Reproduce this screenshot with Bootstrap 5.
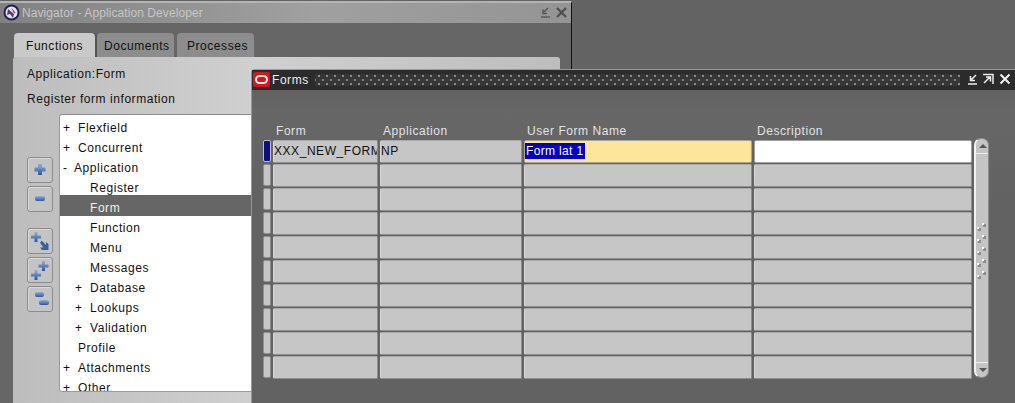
<!DOCTYPE html>
<html lang="en"><head><meta charset="utf-8"><title>Forms</title>
<link href="https://cdn.jsdelivr.net/npm/bootstrap@5.3.0/dist/css/bootstrap.min.css" rel="stylesheet">
<style>
html,body{height:100%}
body{background:#636363;font-family:"Liberation Sans",Arial,sans-serif;font-size:12px;letter-spacing:.55px;color:#111;overflow:hidden;margin:0}
.desk{position:relative;width:1015px;height:403px;overflow:hidden;background:#636363}
.navwin{position:absolute;left:0;top:1px;width:572px;height:420px;background:#666;border-right:1px solid #111;border-top:2px solid #b4b4b4}
.navtitle{height:20px;background:linear-gradient(90deg,#818181,#a0a0a0 55%,#949494);color:#c6c6c6;padding-left:22px;font-size:12px;line-height:21px;position:relative;letter-spacing:.08px}
.logo{position:absolute;left:3px;top:1px}
.wbtns{position:absolute;right:3px;top:3px;gap:3px}
.tabrow{padding-left:14px;gap:3px;height:34px;align-items:flex-end}
.tabx{height:24px;background:#8c8c8c;border-radius:4px 4px 0 0;padding:6px 0 0 10px;color:#111;width:77px;line-height:14px}
.tabx.on{background:#c9c9c9;width:81px;height:26px;padding-left:12px;box-shadow:2px 0 0 #555;margin-right:-1px;margin-bottom:-2px;position:relative}
.tabx.w2{padding-left:7px}
.tabpane{position:relative;margin-left:13px;width:547px;height:370px;background:linear-gradient(90deg,#bdbdbd,#d0d0d0 45%,#bdbdbd);border-radius:3px}
.lab1{padding:10px 0 0 14px;line-height:15px}
.lab2{padding:10px 0 0 14px;line-height:15px}
.sidebtns{position:absolute;left:14px;top:100px;width:26px}
.sbtn{width:26px;height:26px;border:1px solid #8c8c8c;border-radius:3px;background:#c4c4c4;margin-bottom:3px;box-shadow:inset 1px 1px 0 #d8d8d8}
.sbtn svg{display:block}
.gap13{margin-top:16px}
.treebox{position:absolute;left:46px;top:57px;width:200px;height:278px;background:#fff;border:1px solid #9a9a9a;border-top-color:#8a8a8a;border-radius:3px;overflow:hidden;padding-top:3px}
.trow{height:20px;line-height:20px;color:#111;white-space:nowrap;position:relative}
.trow.sel{background:#666;color:#eee;height:21px;margin-top:-3px;margin-bottom:2px;padding-top:3px;line-height:20px}
.tsign{position:absolute;top:0}
.ind0{padding-left:18px}.ind0b{padding-left:14px}.ind1{padding-left:30px}
.formswin{position:absolute;left:251px;top:69px;width:770px;height:340px;background:linear-gradient(180deg,#5a5a5a,#676767 40px,#626262 130px);border:1px solid #999;border-radius:4px 4px 0 0;border-right:0}
.ftitle{height:20px;background:#2b2b2b;color:#eee;position:relative;padding-left:20px;line-height:20px}
.oralogo{position:absolute;left:1px;top:2px;width:17px;height:15px;background:#d3171a;border-radius:2px}
.oralogo::after{content:"";position:absolute;left:2px;top:3px;width:13px;height:9px;border:2px solid #f6e8e8;border-radius:5px}
.dots{position:absolute;left:63px;top:4px;width:645px;height:12px;background-color:#363636;background-image:radial-gradient(circle,#8c8c8c .8px,transparent 1.1px),radial-gradient(circle,#808080 .8px,transparent 1.1px);background-size:8px 8px;background-position:0 -2px,4px 2px}
.fbtns{position:absolute;right:10px;top:3px;gap:3px}
.fbtns svg:last-child{margin-left:2px}
.gridwrap{position:absolute;left:11px;top:54px}
.heads{display:grid;grid-template-columns:105px 142px 228px 218px;column-gap:2px;padding-left:10px;color:#e2e2e2;height:16px;line-height:14px}
.heads span{padding-left:3px}
.gridrows{display:grid;grid-template-columns:8px 105px 142px 228px 218px;grid-auto-rows:24px;column-gap:2px}
.ind{height:22px;background:#c6c6c6;border:1px solid #8f8f8f;border-radius:2px}
.ind.cur{background:#0b127e;border-color:#bcbcd0}
.cellx{height:23px;background:#c6c6c6;border:1px solid #8e8e8e;border-top-color:#aaa;border-left-color:#d9d9d9;border-radius:2px;line-height:20px;color:#111;white-space:nowrap;overflow:hidden}
.cellx.cy{background:#fde69b;border-color:#a9a58a}
.cellx.cw{background:#fff;border-color:#a0a0a0}
.hili{background:#0000c8;color:#fff;padding:1px;letter-spacing:.35px}
.sbar{position:absolute;left:722px;top:68px;width:15px;height:240px;background:#c4c4c4;border:1px solid #8c8c8c;border-left:2px solid #f2f2f2;border-radius:7px}
.sbar::before{content:"";position:absolute;left:0;right:0;top:14px;height:1px;background:#eee}
.sbar::after{content:"";position:absolute;left:0;right:0;bottom:14px;height:1px;background:#eee}
.arrup,.arrdn{position:absolute;left:3px;width:0;height:0;border-left:4px solid transparent;border-right:4px solid transparent}
.arrup{top:5px;border-bottom:4px solid #555}
.arrdn{bottom:5px;border-top:4px solid #555}
.ridge{position:absolute;left:0;top:83px;display:block}
</style></head><body>
<main class="desk">
 <svg width="0" height="0" class="position-absolute"><defs><linearGradient id="gb" x1="0" y1="0" x2="0" y2="1"><stop offset="0" stop-color="#8fb0de"/><stop offset="1" stop-color="#2f5596"/></linearGradient>
 <pattern id="rd" width="12" height="12" patternUnits="userSpaceOnUse"><rect x="2" y="6" width="3" height="3" fill="#8e8e8e"/><rect x="1" y="5" width="2" height="2" fill="#f8f8f8"/><rect x="7" y="2" width="3" height="3" fill="#8e8e8e"/><rect x="6" y="1" width="2" height="2" fill="#f8f8f8"/></pattern></defs></svg>
 <section class="navwin">
  <div class="navtitle">
   <svg class="logo" width="17" height="17" viewBox="0 0 17 17"><circle cx="8.500" cy="8.500" r="7" fill="#e4e4ee" stroke="#22225a" stroke-width="2"/><path d="M5 5l6 5-1 4-3-4-3 1z" fill="#50406e"/><path d="M8 3.500l3 6 1.500-1z" fill="#c0206a"/></svg>
   <span>Navigator - Application Developer</span>
   <div class="wbtns d-flex">
    <svg width="13" height="13" viewBox="0 0 13 13"><path d="M2 11h9M9 2L4 7M4 3.500V7.500H8" stroke="#5c5c5c" stroke-width="1.600" fill="none"/></svg>
    <svg width="13" height="13" viewBox="0 0 13 13"><path d="M2 2l9 9M11 2l-9 9" stroke="#4e4e4e" stroke-width="2.200"/></svg>
   </div>
  </div>
  <div class="tabrow d-flex">
   <div class="tabx on">Functions</div><div class="tabx w2">Documents</div><div class="tabx">Processes</div>
  </div>
  <div class="tabpane">
   <div class="lab1">Application:Form</div>
   <div class="lab2">Register form information</div>
   <div class="sidebtns">
    <div class="sbtn"><svg width="24" height="24" viewBox="0 0 24 24"><path d="M10 6h4v3.500h3.500v4H14V17h-4v-3.500H6.500v-4H10z" fill="url(#gb)"/></svg></div>
    <div class="sbtn"><svg width="24" height="24" viewBox="0 0 24 24"><rect x="7" y="9" width="10" height="5" rx="2" fill="url(#gb)"/></svg></div>
    <div class="sbtn gap13"><svg width="24" height="24" viewBox="0 0 24 24"><path d="M6.500 3h3v3.500H13v3H9.500V13h-3V9.500H3v-3h3.500z" fill="url(#gb)"/><path d="M12 13.500l1.800-1.800 4.200 4.200V13l2.500 2v6H14l-2-2.400h3.200z" fill="#36609f"/></svg></div>
    <div class="sbtn"><svg width="24" height="24" viewBox="0 0 24 24"><path d="M14 3h3v3.500h3.500v3H17V13h-3V9.500h-3.500v-3H14z" fill="url(#gb)"/><path d="M6.500 12h3v3.500H13v3H9.500V22h-3v-3.500H3v-3h3.500z" fill="url(#gb)"/></svg></div>
    <div class="sbtn"><svg width="24" height="24" viewBox="0 0 24 24"><rect x="7" y="5" width="9" height="5" rx="2" fill="url(#gb)"/><rect x="11" y="13" width="10" height="5" rx="2" fill="url(#gb)"/></svg></div>
   </div>
   <div class="treebox">
    <div class="trow ind0"><span class="tsign" style="left:3px">+</span>Flexfield</div>
    <div class="trow ind0"><span class="tsign" style="left:3px">+</span>Concurrent</div>
    <div class="trow ind0b"><span class="tsign" style="left:3px">-</span>Application</div>
    <div class="trow ind1">Register</div>
    <div class="trow ind1 sel">Form</div>
    <div class="trow ind1">Function</div>
    <div class="trow ind1">Menu</div>
    <div class="trow ind1">Messages</div>
    <div class="trow ind1"><span class="tsign" style="left:15px">+</span>Database</div>
    <div class="trow ind1"><span class="tsign" style="left:15px">+</span>Lookups</div>
    <div class="trow ind1"><span class="tsign" style="left:15px">+</span>Validation</div>
    <div class="trow ind0">Profile</div>
    <div class="trow ind0"><span class="tsign" style="left:3px">+</span>Attachments</div>
    <div class="trow ind0"><span class="tsign" style="left:3px">+</span>Other</div>
   </div>
  </div>
 </section>
 <section class="formswin">
  <div class="ftitle"><span class="oralogo"></span>Forms<span class="dots"></span>
   <div class="fbtns d-flex">
    <svg width="12" height="12" viewBox="0 0 12 12"><path d="M1 11h9M9 2L4 7M3.500 3V7.500H8" stroke="#eee" stroke-width="1.500" fill="none"/></svg>
    <svg width="12" height="12" viewBox="0 0 12 12"><path d="M1 1.500h10V11M2 10l6-6M4 4h4.500v4.500" stroke="#eee" stroke-width="1.500" fill="none"/></svg>
    <svg width="12" height="12" viewBox="0 0 12 12"><path d="M1.500 1.500l9 9M10.500 1.500l-9 9" stroke="#f2f2f2" stroke-width="2"/></svg>
   </div>
  </div>
  <div class="gridwrap">
   <div class="heads"><span>Form</span><span>Application</span><span>User Form Name</span><span>Description</span></div>
   <div class="gridrows" id="g"></div>
  </div>
  <div class="sbar"><i class="arrup"></i><svg class="ridge" width="12" height="60"><rect width="12" height="60" fill="url(#rd)"/></svg><i class="arrdn"></i></div>
 </section>
</main>
<script>
var g=document.getElementById('g'),h='';
for(var i=0;i<10;i++){
 if(i==0){h+='<div class="ind cur"></div><div class="cellx">XXX_NEW_FORM</div><div class="cellx">NP</div><div class="cellx cy"><span class="hili">Form lat 1</span></div><div class="cellx cw"></div>';}
 else{h+='<div class="ind"></div><div class="cellx"></div><div class="cellx"></div><div class="cellx"></div><div class="cellx"></div>';}
}
g.innerHTML=h;
</script>
<script src="https://cdn.jsdelivr.net/npm/bootstrap@5.3.0/dist/js/bootstrap.bundle.min.js"></script>
</body></html>
